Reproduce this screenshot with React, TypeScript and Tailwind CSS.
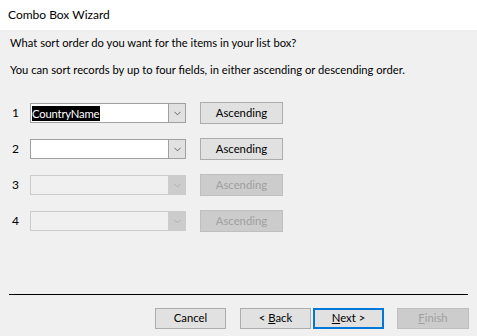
import { ChevronDown } from "lucide-react";

const font = { fontFamily: 'Lato, "Liberation Sans", sans-serif' };

type RowProps = { n: number; value?: string; enabled: boolean };

const SortRow = ({ n, value, enabled }: RowProps) => (
  <div className="flex items-center h-[22px] text-[11.3px]">
    <span className="w-[30px] pl-[12px] text-[12px] text-black">{n}</span>
    <div
      className={`flex h-[20px] w-[156px] border ${
        enabled ? "border-[#a0a0a0] bg-white" : "border-[#cccccc] bg-[#f0f0f0]"
      }`}
    >
      <div className="flex-1 flex items-center pl-[1px]">
        {value && (
          <span className="bg-black text-white leading-[15px] pr-[1px] tracking-[-0.2px]">{value}</span>
        )}
      </div>
      <div
        className={`w-[17px] flex items-center justify-center border-l ${
          enabled ? "bg-[#e1e1e1] border-[#a0a0a0] text-[#303030]" : "bg-[#cccccc] border-[#cccccc] text-[#a0a0a0]"
        }`}
      >
        <ChevronDown size={11} strokeWidth={1.5} />
      </div>
    </div>
    <button
      className={`ml-[14px] h-[22px] w-[83px] border ${
        enabled ? "border-[#adadad] bg-[#e1e1e1] text-black" : "border-[#bfbfbf] bg-[#cccccc] text-[#a0a0a0]"
      }`}
    >
      Ascending
    </button>
  </div>
);

export default function App() {
  return (
    <div className="w-[477px] h-[336px] bg-[#f0f0f0] flex flex-col" style={font}>
      <div className="h-[30px] bg-white pl-[8px] flex items-center text-[12px] text-black">
        Combo Box Wizard
      </div>
      <div className="pl-[10px] pt-[4px] text-[11.2px] text-black leading-[18px]">
        <p>What sort order do you want for the items in your list box?</p>
        <p className="mt-[9px]">You can sort records by up to four fields, in either ascending or descending order.</p>
      </div>
      <div className="mt-[23px] flex flex-col gap-[14px]">
        <SortRow n={1} value="CountryName" enabled />
        <SortRow n={2} enabled />
        <SortRow n={3} enabled={false} />
        <SortRow n={4} enabled={false} />
      </div>
      <div className="mt-auto mb-[7px] text-[11.3px]">
        <div className="mx-[9px] h-[1px] bg-black" />
        <div className="flex mt-[13px] pl-[155px]">
          <button className="h-[21px] w-[71px] border border-[#adadad] bg-[#e1e1e1] text-black">
            Cancel
          </button>
          <button className="ml-[14px] h-[21px] w-[71px] border border-[#adadad] bg-[#e1e1e1] text-black">
            &lt; <u>B</u>ack
          </button>
          <button className="ml-[2px] h-[21px] w-[71px] border-2 border-[#0078d7] bg-[#e1e1e1] text-black">
            <u>N</u>ext &gt;
          </button>
          <button className="ml-[13px] h-[21px] w-[72px] border border-[#bfbfbf] bg-[#cccccc] text-[#a0a0a0]">
            <u>F</u>inish
          </button>
        </div>
      </div>
    </div>
  );
}
